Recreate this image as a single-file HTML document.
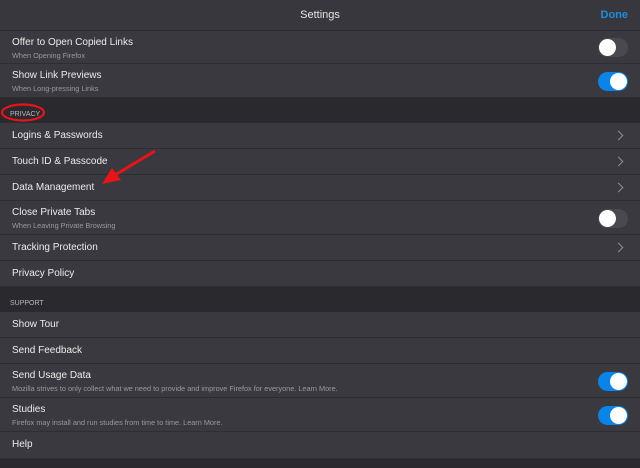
<!DOCTYPE html>
<html><head><meta charset="utf-8"><style>
*{margin:0;padding:0;box-sizing:border-box}
body{width:640px;height:468px;background:#2a292e;font-family:"Liberation Sans",sans-serif;color:#fff;position:relative;overflow:hidden}
.hdr{height:31px;background:#38373d;border-bottom:1px solid #2c2b30;position:relative}
.hdr .t{position:absolute;left:0;right:0;top:9px;text-align:center;font-size:11px;color:#e6e6e6}
.hdr .d{position:absolute;right:12px;top:9px;font-size:11px;color:#1a8ee0;font-weight:bold}
.row{background:#3a393f;border-bottom:1px solid #2e2d32;position:relative;padding-left:12px}
.s{height:26px}.s .l{position:absolute;top:7px;font-size:10px;color:#ececec}
.d2{height:34px}.d2 .l{position:absolute;top:6px;font-size:10px;color:#ececec}
.d2 .sub{position:absolute;top:20px;font-size:7.3px;color:#9a99a0}
.sec{height:25px;position:relative}
.sec span{position:absolute;left:10px;bottom:5px;font-size:7px;color:#b9b8bd}
.chev{position:absolute;right:18px;top:9px;width:7px;height:7px;border-right:1.1px solid #8d8c92;border-top:1.1px solid #8d8c92;transform:rotate(45deg)}
.tg{position:absolute;right:12px;top:8px;width:30px;height:19px;border-radius:10px;background:#4a494f}
.tg::after{content:"";position:absolute;left:1px;top:1px;width:17px;height:17px;border-radius:50%;background:#fff}
.tg.on{background:#0a84e6}.tg.on::after{left:12px}
</style></head><body>
<div class="hdr"><div class="t">Settings</div><div class="d">Done</div></div>
<div class="row d2" style="height:33px"><div class="l">Offer to Open Copied Links</div><div class="sub">When Opening Firefox</div><div class="tg" style="top:7px"></div></div>
<div class="row d2"><div class="l">Show Link Previews</div><div class="sub">When Long-pressing Links</div><div class="tg on"></div></div>
<div class="sec"><span>PRIVACY</span></div>
<div class="row s"><div class="l">Logins &amp; Passwords</div><div class="chev"></div></div>
<div class="row s"><div class="l">Touch ID &amp; Passcode</div><div class="chev"></div></div>
<div class="row s"><div class="l">Data Management</div><div class="chev"></div></div>
<div class="row d2"><div class="l">Close Private Tabs</div><div class="sub">When Leaving Private Browsing</div><div class="tg"></div></div>
<div class="row s"><div class="l">Tracking Protection</div><div class="chev"></div></div>
<div class="row s"><div class="l">Privacy Policy</div></div>
<div class="sec"><span>SUPPORT</span></div>
<div class="row s"><div class="l">Show Tour</div></div>
<div class="row s"><div class="l">Send Feedback</div></div>
<div class="row d2"><div class="l">Send Usage Data</div><div class="sub">Mozilla strives to only collect what we need to provide and improve Firefox for everyone. Learn More.</div><div class="tg on"></div></div>
<div class="row d2"><div class="l">Studies</div><div class="sub">Firefox may install and run studies from time to time. Learn More.</div><div class="tg on"></div></div>
<div class="row s" style="height:27px"><div class="l">Help</div></div>
<svg style="position:absolute;left:0;top:0" width="640" height="468">
<ellipse cx="23" cy="112.5" rx="21" ry="8" fill="none" stroke="#e8141a" stroke-width="2.2"/>
<line x1="155" y1="151" x2="115" y2="175" stroke="#e8141a" stroke-width="3"/>
<polygon points="102,184 112,168 121,180" fill="#e8141a"/>
</svg>
</body></html>
